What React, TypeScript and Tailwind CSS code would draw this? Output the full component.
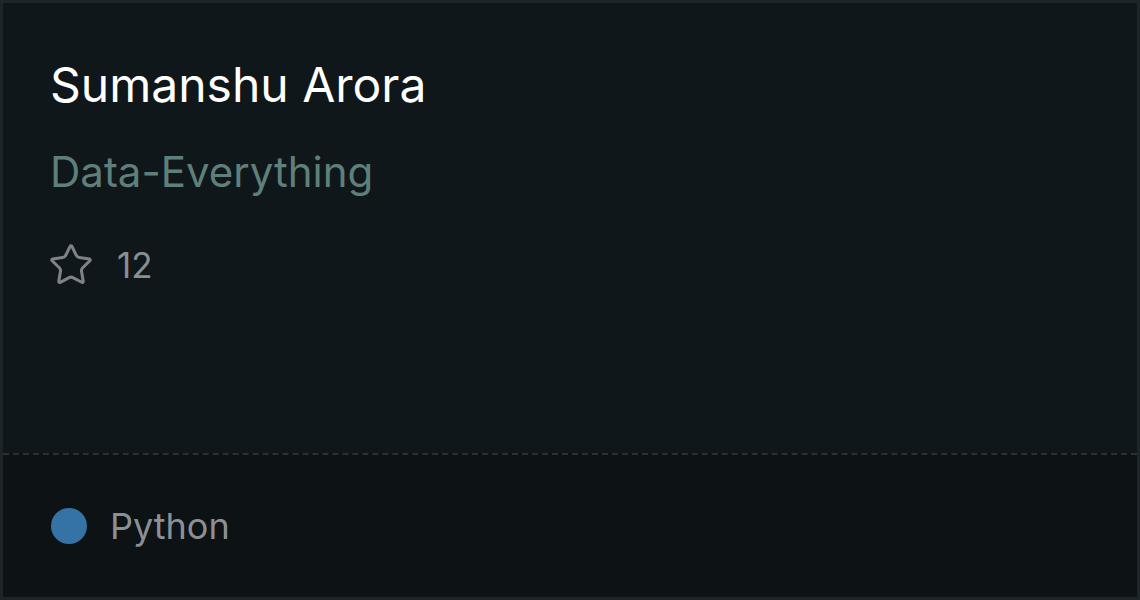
import { Star } from "lucide-react";

export default function App() {
	return (
		<div className="flex h-[600px] w-[1140px] flex-col border-[3px] border-[#1e2528] bg-[#10171a] font-['Inter',sans-serif]">
			<div className="flex flex-1 flex-col pt-[54px] pl-[47px]">
				<h1 className="text-[48px] leading-[56px] text-white">Sumanshu Arora</h1>
				<p className="mt-[35px] text-[42px] leading-[48px] text-[#5f7f7a]">Data-Everything</p>
				<div className="mt-[46px] flex items-center gap-[23px]">
					<Star size={46} strokeWidth={1.6} className="-ml-0.5 text-[#7d8386]" />
					<span className="text-[35px] leading-none text-[#8a8f92]">12</span>
				</div>
			</div>
			<div className="flex h-[144px] items-center gap-[23px] border-t-2 border-dashed border-[#2a3134] bg-[#0d1215] pl-[48px]">
				<span className="h-9 w-9 rounded-full bg-[#3572a5]" />
				<span className="text-[36px] leading-none text-[#8b9094]">Python</span>
			</div>
		</div>
	);
}
